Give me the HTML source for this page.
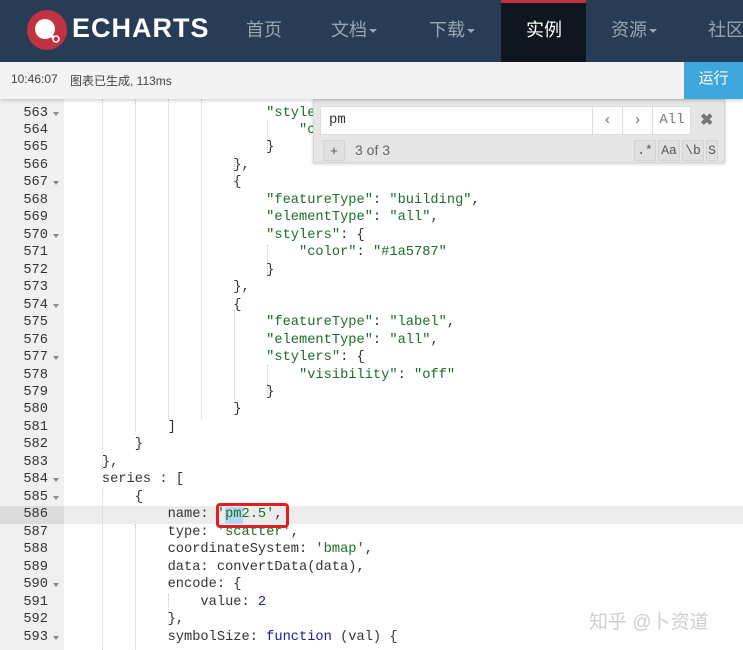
<!DOCTYPE html>
<html><head><meta charset="utf-8"><style>
*{margin:0;padding:0;box-sizing:border-box}
body{width:743px;height:650px;overflow:hidden;background:#fff;font-family:"Liberation Sans","Noto Sans CJK SC",sans-serif;position:relative}
.hd{position:absolute;left:0;top:0;width:743px;height:62px;background:#293c55;overflow:hidden}
.nav{position:absolute;top:0;height:62px;line-height:60px;color:#9aa5b3;font-size:18px;white-space:nowrap}
.car{display:inline-block;width:0;height:0;border-left:4px solid transparent;border-right:4px solid transparent;border-top:4px solid #9aa5b3;vertical-align:middle;margin-left:2px}
.bar{position:absolute;left:0;top:62px;width:743px;height:37px;background:#f3f3f3;box-shadow:0 2px 3px rgba(0,0,0,.15);z-index:5}
.gut{position:absolute;left:0;top:99px;width:64px;height:551px;background:#f0f0f0}
.ln{position:absolute;left:0;width:743px;height:17.47px;font-family:"Liberation Mono",monospace;font-size:13.7px;line-height:17.47px;white-space:pre;color:#333}
.ln .n{position:absolute;left:0;width:48px;text-align:right;color:#333}
.ln .a{position:absolute;left:53px;top:7px;width:0;height:0;border-left:3px solid transparent;border-right:3px solid transparent;border-top:4px solid #888}
.ln .c{position:absolute;left:69px}
.s{color:#1a6e2a}.b{color:#1a1aa6}.k{color:#1a1aa6}
.g{position:absolute;width:0;border-left:1px dotted #ccc;top:99px}
.sp{position:absolute;left:313px;top:99px;width:412px;height:64px;background:#e6e6e6;border:1px solid #d6d6d6;z-index:3;box-shadow:0 1px 3px rgba(0,0,0,.2)}
.in{position:absolute;left:6px;top:6px;width:371px;height:29px;background:#fff;border:1px solid #ddd;font-family:"Liberation Mono",monospace;font-size:14px;line-height:27px;padding-left:8px;color:#333}
.bt{position:absolute;top:0;height:27px;border-left:1px solid #ddd;text-align:center;color:#777;font-size:15px;line-height:27px}
.tg{position:absolute;top:40px;height:21px;border:1px solid #d3d3d3;background:#e0e0e0;font-family:"Liberation Mono",monospace;font-size:13px;line-height:19px;color:#555;text-align:center}
</style></head><body>
<div class="hd">
<svg style="position:absolute;left:26px;top:9px" width="42" height="42" viewBox="0 0 42 42"><circle cx="21" cy="21" r="20" fill="#c23341"/><circle cx="19" cy="20" r="10" fill="#fff"/><path d="M24 26 L31 31" stroke="#fff" stroke-width="3"/><circle cx="30" cy="30" r="3" fill="#c23341" stroke="#fff" stroke-width="1.5"/></svg>
<div style="position:absolute;left:72px;top:13px;color:#fff;font-size:27px;font-weight:bold;letter-spacing:1px;font-family:'Liberation Sans',sans-serif">ECHARTS</div>
<div class="nav" style="left:246px">首页</div>
<div class="nav" style="left:331px">文档<span class="car"></span></div>
<div class="nav" style="left:429px">下载<span class="car"></span></div>
<div style="position:absolute;left:501px;top:0;width:85px;height:62px;background:#10161f;border-top:3px solid #c23341"></div>
<div class="nav" style="left:526px;color:#fff">实例</div>
<div class="nav" style="left:611px">资源<span class="car"></span></div>
<div class="nav" style="left:708px">社区</div>
</div>
<div class="bar"><span style="position:absolute;left:11px;top:10px;font-size:12px;color:#444">10:46:07</span><span style="position:absolute;left:70px;top:10px;font-size:12px;color:#444">图表已生成, 113ms</span>
<div style="position:absolute;left:684px;top:0;width:59px;height:37px;background:#3fa7dc;color:#fff;font-size:15px;line-height:34px;text-align:center">运行</div></div>
<div class="gut"></div>
<div style="position:absolute;left:0;top:506px;width:64px;height:18px;background:#dcdcdc"></div>
<div style="position:absolute;left:64px;top:506px;width:679px;height:18px;background:#ececec"></div>
<div style="position:absolute;left:225px;top:507px;width:18px;height:17px;background:#b5d5f0"></div>
<div class="g" style="left:102px;height:370px"></div>
<div class="g" style="left:102px;top:490px;height:160px"></div>
<div class="g" style="left:135px;top:99px;height:335px"></div>
<div class="g" style="left:168px;top:99px;height:320px"></div>
<div class="g" style="left:201px;top:99px;height:320px"></div>
<div class="g" style="left:234px;top:155px;height:30px"></div>
<div class="g" style="left:234px;top:310px;height:90px"></div>
<div class="g" style="left:267px;top:122px;height:30px"></div>
<div class="g" style="left:267px;top:245px;height:30px"></div>
<div class="g" style="left:267px;top:365px;height:30px"></div>
<div class="g" style="left:135px;top:524px;height:126px"></div>
<div class="g" style="left:168px;top:594px;height:20px"></div>
<div id="code"></div>
<div style="position:absolute;left:216px;top:503px;width:73px;height:25px;border:3px solid #e02020;border-radius:4px;z-index:2"></div>
<div class="sp">
<div class="in">pm
<div class="bt" style="left:271px;width:30px">&#x2039;</div>
<div class="bt" style="left:301px;width:30px">&#x203A;</div>
<div class="bt" style="left:331px;width:39px;font-family:'Liberation Mono',monospace;font-size:14px">All</div>
</div>
<div style="position:absolute;left:386px;top:10px;color:#777;font-size:16px;font-weight:bold">✖</div>
<div class="tg" style="left:9px;width:22px;font-family:'Liberation Sans';">+</div>
<div style="position:absolute;left:41px;top:42px;color:#666;font-size:14px">3 of 3</div>
<div class="tg" style="left:320px;width:22px">.*</div>
<div class="tg" style="left:344px;width:22px">Aa</div>
<div class="tg" style="left:368px;width:22px">\b</div>
<div class="tg" style="left:392px;width:12px">S</div>
</div>
<div style="position:absolute;left:589px;top:607px;font-size:19px;color:#cfcfcf">知乎 @卜资道</div>
<script>
var A='        ',B='    ';
var L=[
[563,A+'                "stylers": {',1],
[564,A+'                    "color": "#0e2c40"',0],
[565,A+'                }',0],
[566,A+'            },',0],
[567,A+'            {',1],
[568,A+'                "featureType": "building",',0],
[569,A+'                "elementType": "all",',0],
[570,A+'                "stylers": {',1],
[571,A+'                    "color": "#1a5787"',0],
[572,A+'                }',0],
[573,A+'            },',0],
[574,A+'            {',1],
[575,A+'                "featureType": "label",',0],
[576,A+'                "elementType": "all",',0],
[577,A+'                "stylers": {',1],
[578,A+'                    "visibility": "off"',0],
[579,A+'                }',0],
[580,A+'            }',0],
[581,B+'        ]',0],
[582,B+'    }',0],
[583,'    },',0],
[584,'    series : [',1],
[585,'        {',1],
[586,"            name: 'pm2.5',",0],
[587,"            type: 'scatter',",0],
[588,"            coordinateSystem: 'bmap',",0],
[589,'            data: convertData(data),',0],
[590,'            encode: {',1],
[591,'                value: 2',0],
[592,'            },',0],
[593,'            symbolSize: function (val) {',1]];
var h='';
function esc(s){return s.replace(/&/g,'&amp;').replace(/</g,'&lt;');}
function col(s){s=esc(s);
s=s.replace(/("[^"]*"|'[^']*')/g,'<span class="s">$1</span>');
s=s.replace(/function/,'<span class="k">function</span>');
s=s.replace(/value: 2/,'value: <span class="b">2</span>');
return s;}
for(var i=0;i<L.length;i++){var t=104.5+(L[i][0]-563)*17.47;
h+='<div class="ln" style="top:'+t+'px"><span class="n">'+L[i][0]+'</span>'+(L[i][2]?'<span class="a"></span>':'')+'<span class="c">'+col(L[i][1])+'</span></div>';}
document.getElementById('code').innerHTML=h;
</script>
</body></html>
